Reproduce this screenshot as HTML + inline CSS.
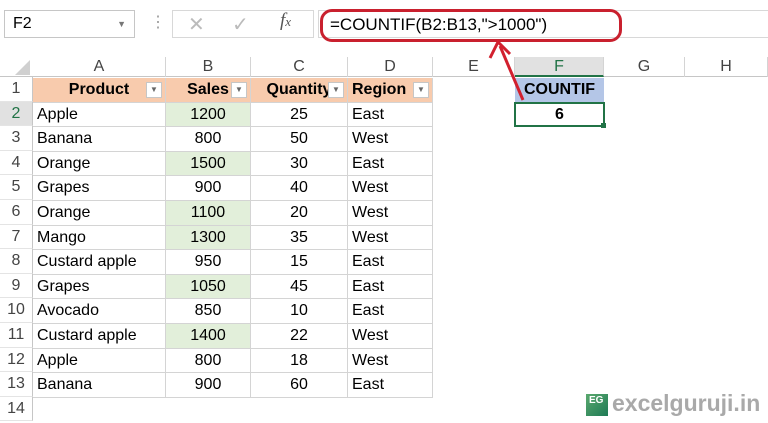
<!DOCTYPE html>
<html><head><style>
*{margin:0;padding:0;box-sizing:border-box}
body{width:768px;height:423px;background:#fff;font-family:"Liberation Sans",sans-serif;position:relative;overflow:hidden}
.abs{position:absolute}
.cell{position:absolute;font-size:16px;line-height:24px;height:24px;color:#000;white-space:nowrap;overflow:hidden}
</style></head><body>
<div class="abs" style="left:4px;top:10px;width:131px;height:28px;border:1px solid #c6c6c6;font-size:16px;line-height:26px;padding-left:8px">F2<span style="position:absolute;right:8px;top:0;font-size:9px;color:#777">▼</span></div>
<div class="abs" style="left:150px;top:12px;font-size:16px;color:#999">⋮</div>
<div class="abs" style="left:172px;top:10px;width:142px;height:28px;border:1px solid #d8d8d8"></div>
<div class="abs" style="left:188px;top:12px;font-size:20px;color:#bbb">✕</div>
<div class="abs" style="left:232px;top:12px;font-size:20px;color:#bbb">✓</div>
<div class="abs" style="left:280px;top:10px;font-size:19px;font-style:italic;font-family:'Liberation Serif',serif;color:#555">f<span style="font-size:13px">x</span></div>
<div class="abs" style="left:318px;top:10px;width:460px;height:28px;border:1px solid #d8d8d8"></div>
<div class="abs" style="left:320px;top:9px;width:302px;height:33px;border:3px solid #c9202e;border-radius:12px"></div>
<div class="abs" style="left:330px;top:15px;font-size:17px">=COUNTIF(B2:B13,"&gt;1000")</div>
<div class="abs" style="left:0;top:57px;width:768px;height:20px;background:#fff;border-bottom:1px solid #c6c6c6"></div>
<svg class="abs" style="left:14px;top:60px" width="16" height="15"><polygon points="16,0 16,15 1,15" fill="#d0d0d0"/></svg>
<div id="cols"></div>
<div id="grid"></div>
<svg class="abs" style="left:0;top:0" width="768" height="423">
<line x1="523" y1="100" x2="500" y2="46" stroke="#d2202e" stroke-width="3"/>
<polyline points="490,58 498,42 510,54" fill="none" stroke="#d2202e" stroke-width="3"/>
</svg>
<div class="abs" style="left:586px;top:394px;width:22px;height:22px;background:linear-gradient(135deg,#5aa86e,#1e7a55);color:#fff;font-size:10px;font-weight:bold;line-height:14px;padding-left:3px">EG</div>
<div class="abs" style="left:612px;top:390px;font-size:23px;font-weight:bold;color:#a9a9a9">excelguruji.in</div>
<script>
const cx=[0,33,166,251,348,433,515,604,685,768];
const names=['','A','B','C','D','E','F','G','H'];
let h='';
for(let i=1;i<9;i++){h+=`<div class="abs" style="left:${cx[i]}px;top:57px;width:${cx[i+1]-cx[i]}px;height:20px;border-right:1px solid #d4d4d4;text-align:center;font-size:16px;line-height:20px;color:#444;${i==6?'background:#e1e1e1;border-bottom:2px solid #217346;color:#217346':''}">${names[i]}</div>`}
document.getElementById('cols').innerHTML=h;
const data=[['Apple',1200,25,'East'],['Banana',800,50,'West'],['Orange',1500,30,'East'],['Grapes',900,40,'West'],['Orange',1100,20,'West'],['Mango',1300,35,'West'],['Custard apple',950,15,'East'],['Grapes',1050,45,'East'],['Avocado',850,10,'East'],['Custard apple',1400,22,'West'],['Apple',800,18,'West'],['Banana',900,60,'East']];
const rh=24.6,top0=77;let g='';
for(let r=0;r<14;r++){const y=top0+r*rh;
g+=`<div class="abs" style="left:0;top:${y}px;width:33px;height:${rh}px;border-right:1px solid #c6c6c6;border-bottom:1px solid #e4e4e4;text-align:center;font-size:16px;line-height:${rh}px;color:${r==1?'#217346':'#444'};${r==1?'background:#e1e1e1':''}">${r+1}</div>`;
for(let c=1;c<9;c++){let bg='',txt='',al='left',fw='normal';
if(r==0&&c<=4){bg='#f8cbad';fw='bold';txt=['','Product','Sales','Quantity','Region'][c];al=c==4?'left':'center';}
if(r>0&&r<13&&c<=4){const d=data[r-1];txt=d[c-1];al=(c==2||c==3)?'center':'left';if(c==2&&d[1]>1000)bg='#e2efda';}
if(c==6&&r==0){bg='#b4c6e7';txt='COUNTIF';fw='bold';al='center'}
if(c==6&&r==1){txt='6';fw='bold';al='center'}
if(!txt&&!bg)continue;
const w=cx[c+1]-cx[c];const bd=(c<=4&&r<13)?'border-right:1px solid #d4d4d4;border-bottom:1px solid #d4d4d4':'';
g+=`<div class="cell" style="left:${cx[c]}px;top:${y+1}px;width:${w}px;height:${rh}px;line-height:${rh}px;background:${bg||'#fff'};text-align:${al};font-weight:${fw};padding-left:${al=='left'?4:0}px;${bd}">${txt}</div>`;
if(r==0&&c<=4){g+=`<div class="abs" style="left:${cx[c+1]-20}px;top:${y+5}px;width:16px;height:16px;background:#fff;border:1px solid #c6c6c6;font-size:8px;text-align:center;line-height:14px;color:#666">▼</div>`}
}}
g+=`<div class="abs" style="left:514px;top:${top0+rh}px;width:91px;height:${rh+1}px;border:2px solid #217346"></div><div class="abs" style="left:601px;top:${top0+2*rh-3}px;width:5px;height:5px;background:#217346"></div>`;
document.getElementById('grid').innerHTML=g;
</script>
</body></html>
